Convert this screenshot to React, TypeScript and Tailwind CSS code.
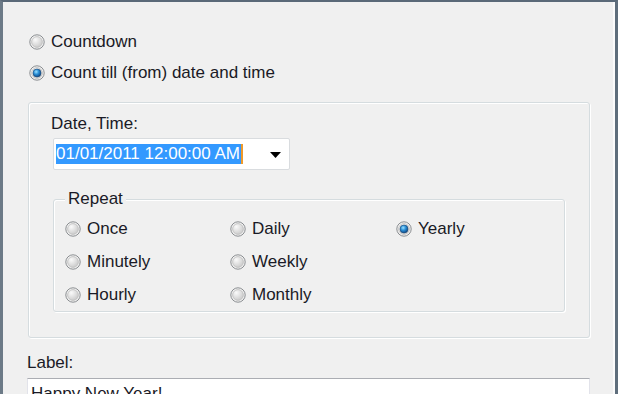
import React from "react";

function Radio({ checked = false, id }: { checked?: boolean; id: string }) {
  return (
    <svg width="16" height="16" viewBox="0 0 16 16" className="shrink-0">
      <defs>
        <radialGradient id={`bg-${id}`} cx="0.35" cy="0.3" r="0.85">
          <stop offset="0" stopColor="#fafafa" />
          <stop offset="0.55" stopColor="#dcdcdc" />
          <stop offset="1" stopColor="#c2c2c2" />
        </radialGradient>
        <radialGradient id={`dot-${id}`} cx="0.4" cy="0.35" r="0.7">
          <stop offset="0" stopColor="#9be0ff" />
          <stop offset="0.45" stopColor="#2a8fd6" />
          <stop offset="1" stopColor="#0b3f7c" />
        </radialGradient>
      </defs>
      <circle cx="8" cy="8" r="7.2" fill="#f4f4f4" stroke="#8a8d90" strokeWidth="1" />
      <circle cx="8" cy="8" r="5.4" fill={`url(#bg-${id})`} stroke="#bdbdbd" strokeWidth="0.8" />
      {checked && <circle cx="8" cy="8" r="4" fill={`url(#dot-${id})`} stroke="#1d4a78" strokeWidth="0.6" />}
    </svg>
  );
}

function Option({ label, checked = false, id }: { label: string; checked?: boolean; id: string }) {
  return (
    <div className="flex h-[24px] items-center gap-[6px]">
      <Radio checked={checked} id={id} />
      <span className="leading-[20px]">{label}</span>
    </div>
  );
}

export default function App() {
  return (
    <div
      className="h-[394px] w-[618px] overflow-hidden border-l-[3px] border-r-[3px] border-t-2 border-l-[#6c7a87] border-r-[#5f6e7c] border-t-[#5a6978] bg-[#f0f0f0] text-[17px] text-[#1a1a26]"
      style={{ fontFamily: '"Liberation Sans", Arial, sans-serif' }}
    >
      <div className="h-full border-r-2 border-r-[#fbfbfb] pl-[24px] pr-[23px] pt-[28px]">
        <div className="ml-[2px] flex flex-col gap-[7px]">
          <Option label="Countdown" id="c1" />
          <Option label="Count till (from) date and time" checked id="c2" />
        </div>

        <div className="ml-[1px] mt-[17px] h-[236px] rounded-[3px] border border-[#d5dcdf] pl-[22px] pr-[24px] pt-[11px] shadow-[inset_1px_1px_0_#ffffff,1px_1px_0_#ffffff]">
          <div className="leading-[20px]">Date, Time:</div>
          <div className="ml-[2px] mt-[4px] flex h-[32px] w-[237px] items-center rounded-[2px] border border-[#d9dcdf] bg-white pl-[2px] pr-[8px]">
            <span className="flex h-[20px] items-center bg-[#3399ff] pr-[1px] leading-[20px] text-white">
              01/01/2011 12:00:00 AM
            </span>
            <span className="h-[20px] w-[2px] bg-[#f09a2a]" />
            <div className="flex-1" />
            <svg width="11" height="6" viewBox="0 0 11 6" className="mt-[2px]">
              <path d="M0 0 H11 L5.5 6 Z" fill="#000000" />
            </svg>
          </div>

          <div className="relative ml-[2px] mt-[29px] h-[113px] rounded-[3px] border border-[#d5dcdf] pl-[11px] pt-[17px] shadow-[inset_1px_1px_0_#ffffff,1px_1px_0_#ffffff]">
            <span className="absolute left-[11px] top-[-12px] bg-[#f0f0f0] px-[3px] leading-[22px]">Repeat</span>
            <div className="grid grid-cols-[165px_166px_120px] gap-y-[9px]">
              <Option label="Once" id="r1" />
              <Option label="Daily" id="r2" />
              <Option label="Yearly" checked id="r3" />
              <Option label="Minutely" id="r4" />
              <Option label="Weekly" id="r5" />
              <div />
              <Option label="Hourly" id="r7" />
              <Option label="Monthly" id="r8" />
              <div />
            </div>
          </div>
        </div>

        <div className="mt-[15px] leading-[20px]">Label:</div>
        <div className="mt-[5px] h-[40px] border border-[#e2e3ea] border-t-[#abadb3] bg-white pl-[3px] pt-[5px] leading-[20px]">
          Happy New Year!
        </div>
      </div>
    </div>
  );
}
